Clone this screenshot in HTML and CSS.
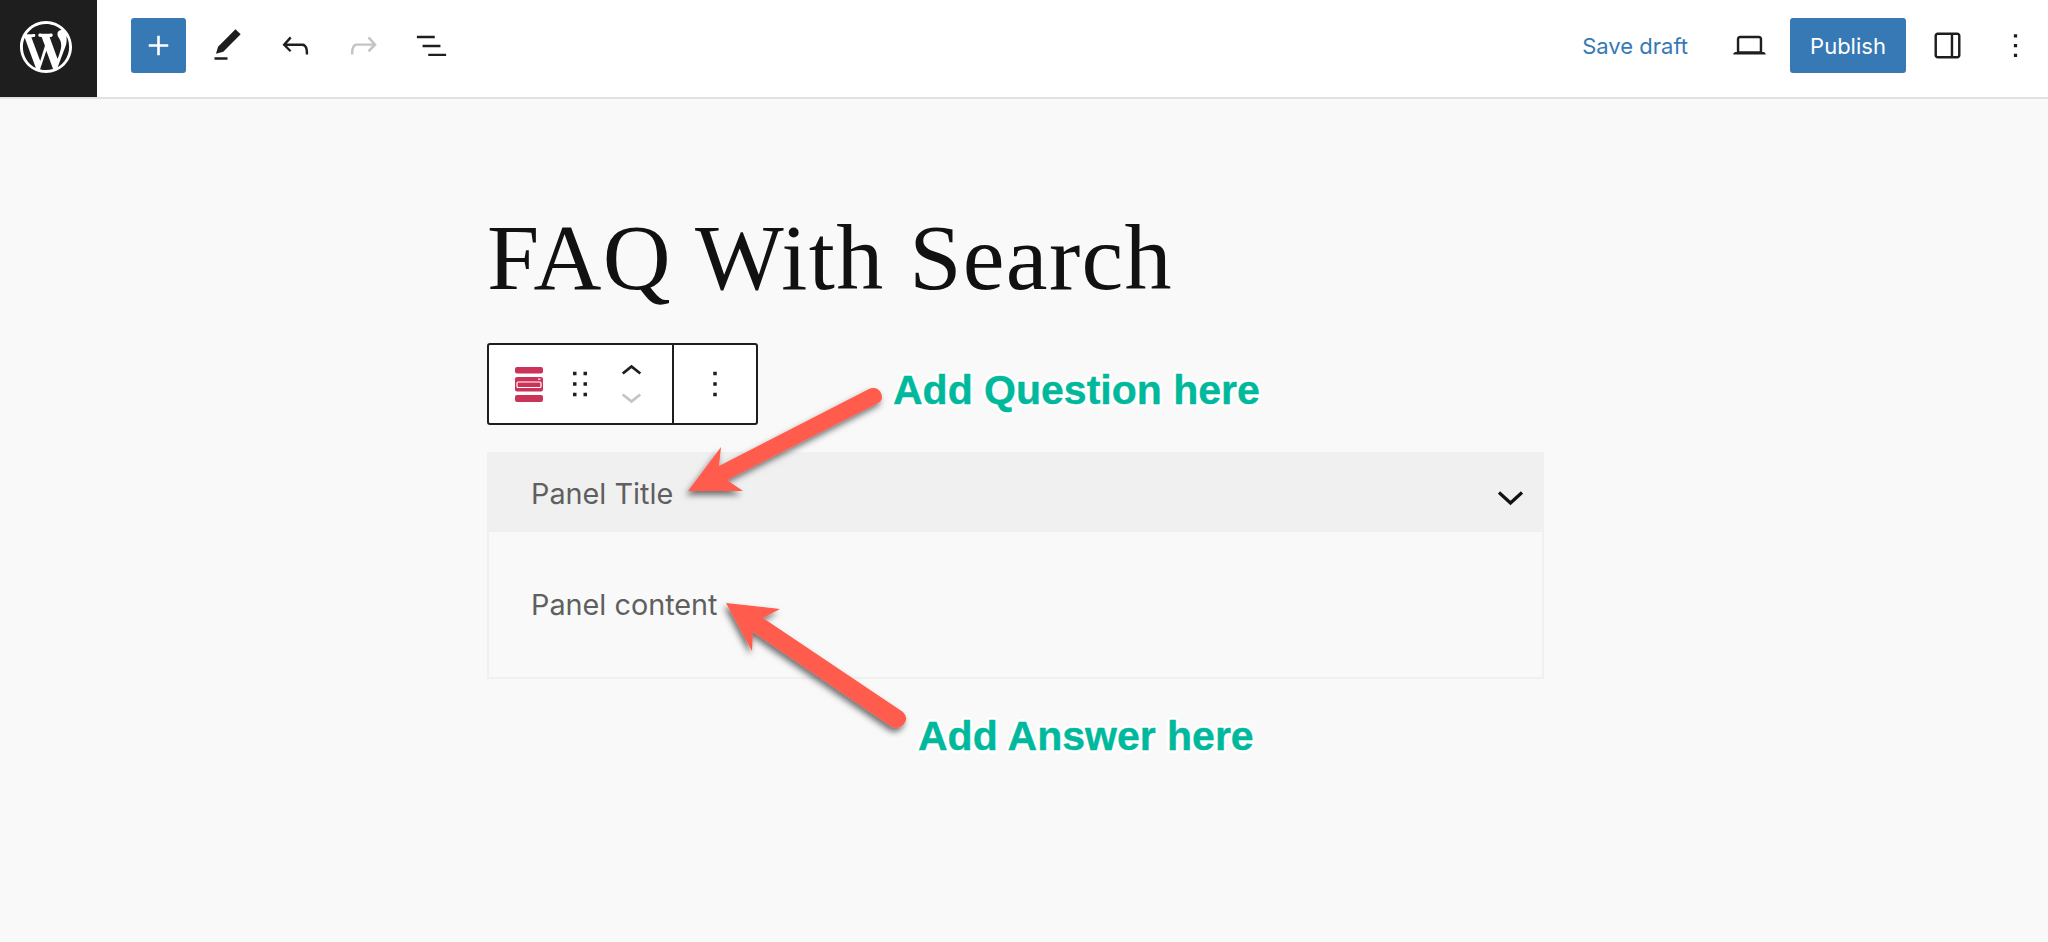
FILE: index.html
```html
<!DOCTYPE html>
<html lang="en">
<head>
    <meta charset="UTF-8">
    <title>FAQ With Search</title>
    <link rel="stylesheet" href="styles.css">
</head>
<body>
    <header class="topbar">
        <div class="logo">
            <svg viewBox="0 0 20 20" width="52" height="52"><path fill="#fff" d="M20 10c0-5.51-4.49-10-10-10C4.48 0 0 4.49 0 10c0 5.52 4.48 10 10 10 5.51 0 10-4.48 10-10zM7.78 15.37L4.37 6.22c.55-.02 1.17-.08 1.17-.08.5-.06.44-1.13-.06-1.11 0 0-1.45.11-2.37.11-.18 0-.37 0-.58-.01C4.12 2.69 6.87 1.11 10 1.11c2.33 0 4.45.87 6.05 2.34-.68-.11-1.65.39-1.65 1.58 0 .74.45 1.36.9 2.1.35.61.55 1.36.55 2.46 0 1.49-1.4 5-1.4 5l-3.03-8.37c.54-.02.82-.17.82-.17.5-.05.44-1.25-.06-1.22 0 0-1.44.12-2.38.12-.87 0-2.33-.12-2.33-.12-.5-.03-.56 1.2-.06 1.22l.92.08 1.26 3.41zM17.41 10c.24-.64.74-1.87.43-4.25.7 1.29 1.05 2.71 1.05 4.25 0 3.29-1.73 6.24-4.4 7.78.97-2.59 1.94-5.2 2.92-7.78zM6.1 18.09C3.12 16.65 1.11 13.53 1.11 10c0-1.3.23-2.48.72-3.59C3.25 10.3 4.67 14.2 6.1 18.09zm4.03-6.63l2.58 6.98c-.86.29-1.76.45-2.71.45-.79 0-1.57-.11-2.29-.33.81-2.38 1.62-4.74 2.42-7.1z"/></svg>
        </div>
        <div class="tools">
            <button class="add-btn">
                <svg viewBox="0 0 24 24" width="39" height="39"><path fill="#fff" d="M18 11.2h-5.2V6h-1.6v5.2H6v1.6h5.2V18h1.6v-5.2H18z"/></svg>
            </button>
            <svg class="icon" viewBox="0 0 24 24"><path d="M20.1 5.1L16.9 2 6.2 12.7l-1.3 4.4 4.5-1.3L20.1 5.1zM4 20.8h8v-1.5H4v1.5z"/></svg>
            <svg class="icon" viewBox="0 0 24 24"><path d="M18.3 11.7c-.6-.6-1.4-.9-2.3-.9H6.7l2.9-3.3-1.1-1-4.5 5L8.5 16l1-1-2.7-2.7H16c.5 0 .9.2 1.3.5 1 1 1 3.4 1 4.5v.3h1.5v-.2c0-1.5 0-4.3-1.5-5.7z"/></svg>
            <svg class="icon icon-off" viewBox="0 0 24 24"><path d="M15.6 6.5l-1.1 1 2.9 3.3H8c-.9 0-1.7.3-2.3.9-1.4 1.5-1.4 4.2-1.4 5.6v.2h1.5v-.3c0-1.1 0-3.5 1-4.5.3-.3.7-.5 1.3-.5h9.2L14.5 15l1.1 1.1 4.6-4.6-4.6-5z"/></svg>
            <svg class="icon" viewBox="0 0 24 24"><path d="M3 6h11v1.5H3V6zm3.5 5.5h11V13h-11v-1.5zM21 17H10v1.5h11V17z"/></svg>
        </div>
        <div class="actions">
            <span class="save-draft">Save draft</span>
            <svg class="icon" viewBox="0 0 24 24"><path d="M20.5 16h-.7V8c0-1.1-.9-2-2-2H6.2c-1.1 0-2 .9-2 2v8h-.7c-.8 0-1.5.7-1.5 1.5h20c0-.8-.7-1.5-1.5-1.5zM5.7 8c0-.3.2-.5.5-.5h11.6c.3 0 .5.2.5.5v7.6H5.7V8z"/></svg>
            <button class="publish-btn">Publish</button>
            <svg class="icon" viewBox="0 0 24 24"><path d="M18 4H6c-1.1 0-2 .9-2 2v12c0 1.1.9 2 2 2h12c1.1 0 2-.9 2-2V6c0-1.1-.9-2-2-2zM6 18.5c-.3 0-.5-.2-.5-.5V6c0-.3.2-.5.5-.5h8v13H6zm12.5-.5c0 .3-.2.5-.5.5h-2.5v-13H18c.3 0 .5.2.5.5v12z"/></svg>
            <svg class="icon" viewBox="0 0 24 24"><path d="M13 19h-2v-2h2v2zm0-6h-2v-2h2v2zm0-6h-2V5h2v2z"/></svg>
        </div>
    </header>

    <main class="editor">
        <h1 class="post-title">FAQ With Search</h1>

        <div class="block-toolbar">
            <div class="toolbar-group">
                <svg class="block-icon" viewBox="0 0 28 35">
                    <rect x="0" y="0" width="28" height="6.5" rx="2"/>
                    <rect x="0" y="10" width="28" height="14.5" rx="2"/>
                    <rect x="2" y="15" width="24" height="5.5" rx="1" fill="none" stroke="#fff" stroke-width="1.2"/>
                    <rect x="23" y="11.5" width="2.5" height="1.2" fill="#fff"/>
                    <rect x="0" y="28" width="28" height="7" rx="2"/>
                </svg>
                <svg class="drag-icon" viewBox="0 0 24 24"><path d="M8 7h2V5H8v2zm0 6h2v-2H8v2zm0 6h2v-2H8v2zm6-14v2h2V5h-2zm0 8h2v-2h-2v2zm0 6h2v-2h-2v2z"/></svg>
                <div class="mover">
                    <svg viewBox="6 7 12 8" width="21" height="14"><path d="M6.5 12.4L12 8l5.5 4.4-.9 1.2L12 10l-4.5 3.6-1-1.2z"/></svg>
                    <svg class="mover-off" viewBox="6 9 12 8" width="21" height="14"><path d="M17.5 11.6L12 16l-5.5-4.4.9-1.2L12 14l4.5-3.6 1 1.2z"/></svg>
                </div>
            </div>
            <div class="toolbar-more">
                <svg class="drag-icon" viewBox="0 0 24 24"><path d="M13 19h-2v-2h2v2zm0-6h-2v-2h2v2zm0-6h-2V5h2v2z"/></svg>
            </div>
        </div>

        <section class="panel">
            <div class="panel-head">
                <span>Panel Title</span>
                <svg viewBox="0 0 27 18" width="27" height="18"><polyline points="2,3.5 13.5,14 25,3.5" fill="none" stroke="#111" stroke-width="3.2"/></svg>
            </div>
            <div class="panel-body">Panel content</div>
        </section>
    </main>

    <!-- annotations drawn over the screenshot -->
    <svg class="arrows" width="2048" height="942" viewBox="0 0 2048 942">
        <defs>
            <filter id="arrowShadow" x="-20%" y="-20%" width="140%" height="140%">
                <feDropShadow dx="-2" dy="4" stdDeviation="3" flood-color="#000" flood-opacity="0.55"/>
            </filter>
        </defs>
        <path filter="url(#arrowShadow)" fill="#ff5b4d" d="M688 491L721 447L719 466L869 389Q877 386 881 393Q884 400 878 403L727 480L743 491Z"/>
        <path filter="url(#arrowShadow)" fill="#ff5b4d" d="M726 603L780 609L763 618L903 712Q909 718 904 724Q898 730 892 727L753 632L752 651Z"/>
    </svg>
    <div class="note note-question">Add Question here</div>
    <div class="note note-answer">Add Answer here</div>
</body>
</html>
```

FILE: styles.css
```css
* {
    box-sizing: border-box;
}

body {
    margin: 0;
    height: 942px;
    overflow: hidden;
    position: relative;
    background-color: #f9f9f9;
    font-family: Inter, "Noto Sans", sans-serif;
}

svg {
    display: block;
}

button {
    border: none;
    border-radius: 3px;
    background-color: #3679b5;
    color: #fff;
    font-family: inherit;
    padding: 0;
}

.topbar {
    display: flex;
    align-items: center;
    height: 99px;
    background-color: #fff;
    border-bottom: 2px solid #e2e2e2;
}

.logo {
    display: flex;
    align-items: center;
    justify-content: center;
    width: 97px;
    height: 97px;
    padding: 0 5px 4px 0;
    background-color: #1e1e1e;
}

.tools {
    display: flex;
    align-items: center;
    gap: 29px;
    padding-left: 34px;
    margin-bottom: 6px;
}

.add-btn {
    display: flex;
    align-items: center;
    justify-content: center;
    width: 55px;
    height: 55px;
    margin-right: -7px;
}

.icon {
    width: 39px;
    height: 39px;
    fill: #1e1e1e;
}

.icon-off {
    fill: #c4c4c4;
}

.actions {
    display: flex;
    align-items: center;
    margin-left: auto;
    margin-bottom: 6px;
    padding-right: 13px;
}

.save-draft {
    font-size: 22px;
    color: #3679b5;
    margin-right: 42px;
}

.publish-btn {
    width: 116px;
    height: 55px;
    font-size: 22px;
    margin: 0 22px 0 21px;
}

.publish-btn + .icon {
    margin-right: 29px;
}

.editor {
    padding-left: 487px;
}

.post-title {
    margin: 0;
    padding-top: 104px;
    font-family: "Liberation Serif", serif;
    font-size: 94px;
    font-weight: 400;
    letter-spacing: 1.3px;
    line-height: 108px;
    color: #111;
}

.block-toolbar {
    display: flex;
    width: 271px;
    height: 82px;
    margin-top: 32px;
    background-color: #fff;
    border: 2px solid #1e1e1e;
    border-radius: 3px;
}

.toolbar-group {
    display: flex;
    align-items: center;
    width: 185px;
    padding-left: 26px;
    border-right: 2px solid #1e1e1e;
}

.block-icon {
    width: 28px;
    height: 35px;
    fill: #cb3358;
}

.drag-icon {
    width: 42px;
    height: 42px;
    fill: #1e1e1e;
}

.block-icon + .drag-icon {
    margin-left: 16px;
}

.mover {
    display: flex;
    flex-direction: column;
    gap: 14px;
    margin-left: 20px;
    fill: #1e1e1e;
}

.mover-off {
    fill: #c4c4c4;
}

.toolbar-more {
    display: flex;
    align-items: center;
    justify-content: center;
    flex: 1;
}

.panel {
    width: 1057px;
    margin-top: 27px;
    border: 2px solid #f0f0f0;
    font-size: 28.8px;
    color: #5f5f5f;
}

.panel-head {
    display: flex;
    align-items: center;
    justify-content: space-between;
    height: 78px;
    padding: 0 18px 0 42px;
    background-color: #f0f0f0;
}

.panel-head svg {
    margin-top: 9px;
}

.panel-body {
    height: 145px;
    padding: 53px 42px 0;
    line-height: 40px;
}

.arrows {
    position: absolute;
    left: 0;
    top: 0;
}

.note {
    position: absolute;
    font-family: "Liberation Sans", Arial, sans-serif;
    font-size: 41px;
    font-weight: 700;
    line-height: 48px;
    color: #00b89c;
    white-space: nowrap;
    -webkit-text-stroke: 0.4px #00b89c;
    text-shadow: 3px 0 0 #fff, -3px 0 0 #fff, 0 3px 0 #fff, 0 -3px 0 #fff, 2px 2px 0 #fff, -2px 2px 0 #fff, 2px -2px 0 #fff, -2px -2px 0 #fff;
}

.note-question {
    left: 893px;
    top: 366px;
}

.note-answer {
    left: 918px;
    top: 712px;
}
```
